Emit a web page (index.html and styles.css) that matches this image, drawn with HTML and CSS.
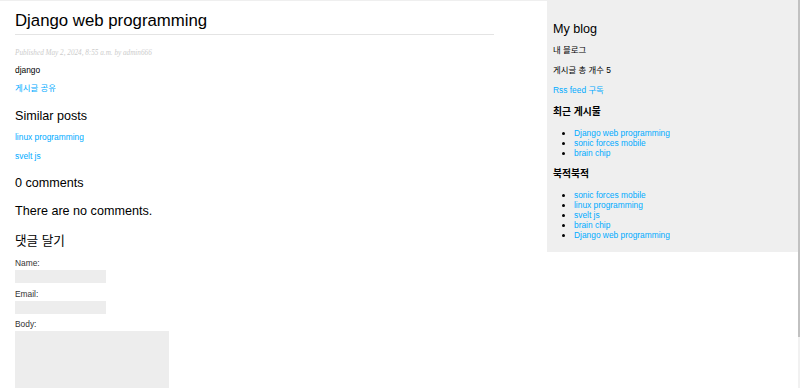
FILE: index.html
```html
<!DOCTYPE html>
<html lang="ko">
<head>
<meta charset="utf-8">
<title>Django web programming</title>
<link rel="stylesheet" href="styles.css">
</head>
<body>
<div class="page">
  <div class="content">
    <h1>Django web programming</h1>
    <p class="date">Published May 2, 2024, 8:55 a.m. by admin666</p>
    <p>django</p>
    <p><a href="#">게시글 공유</a></p>
    <h2>Similar posts</h2>
    <p><a href="#">linux programming</a></p>
    <p><a href="#">svelt js</a></p>
    <h2>0 comments</h2>
    <p class="big">There are no comments.</p>
    <h2>댓글 달기</h2>
    <form class="form">
      <label class="label">Name:</label>
      <input class="input" type="text">
      <label class="label">Email:</label>
      <input class="input" type="text">
      <label class="label">Body:</label>
      <textarea class="textarea"></textarea>
    </form>
  </div>
  <div class="sidebar">
    <h2>My blog</h2>
    <p>내 블로그</p>
    <p>게시글 총 개수 5</p>
    <p><a href="#">Rss feed 구독</a></p>
    <h3>최근 게시물</h3>
    <ul>
      <li><a href="#">Django web programming</a></li>
      <li><a href="#">sonic forces mobile</a></li>
      <li><a href="#">brain chip</a></li>
    </ul>
    <h3>북적북적</h3>
    <ul>
      <li><a href="#">sonic forces mobile</a></li>
      <li><a href="#">linux programming</a></li>
      <li><a href="#">svelt js</a></li>
      <li><a href="#">brain chip</a></li>
      <li><a href="#">Django web programming</a></li>
    </ul>
  </div>
</div>
<div class="scrollbar"><div class="thumb"></div></div>
</body>
</html>
```
FILE: styles.css
```css
html, body {
  margin: 0;
  padding: 0;
}
body {
  font-family: "Liberation Sans", Arial, "Noto Sans CJK KR", sans-serif;
  font-size: 8.4px;
  line-height: 10.08px;
  color: #000;
  background: #fff;
  height: 388px;
  overflow: hidden;
  border-top: 1px solid #efefef;
  box-sizing: border-box;
}
a {
  color: #00abff;
  text-decoration: none;
}
.page {
  display: flex;
  justify-content: space-between;
  align-items: flex-start;
  width: 798px;
}
.content {
  width: 479px;
  padding-left: 15px;
}
h1 {
  font-weight: normal;
  font-size: 16.8px;
  line-height: 19.3px;
  margin: 10.25px 0 13.5px;
  padding-bottom: 3.5px;
  border-bottom: 1px solid #e4e4e4;
}
h2 {
  font-weight: normal;
  font-size: 12.6px;
  line-height: 14.5px;
  margin: 15.75px 0 0;
}
h3 {
  font-size: 9.8px;
  line-height: 12px;
  font-weight: bold;
  margin: 9.8px 0;
}
p {
  margin: 8.4px 0;
}
p.date {
  color: #ccc;
  font-family: "Liberation Serif", Georgia, serif;
  font-style: italic;
  font-size: 7.2px;
  line-height: 8px;
  margin: 6.3px 0;
}
p.big {
  font-size: 12.6px;
  line-height: 14.5px;
  margin: 12.6px 0;
}
.form {
  margin-top: 10px;
}
.label {
  display: block;
  color: #333;
  margin-bottom: 2.1px;
}
.input {
  display: block;
  width: 91px;
  height: 13px;
  box-sizing: border-box;
  border: 0;
  padding: 0;
  margin: 0 0 5.25px;
  background: #ededed;
}
.textarea {
  display: block;
  width: 154px;
  height: 90px;
  box-sizing: border-box;
  border: 0;
  padding: 0;
  margin: 0;
  background: #ededed;
  resize: none;
}
.sidebar {
  width: 251px;
  box-sizing: border-box;
  padding: 6.5px 6px 4px;
  background: #efefef;
  margin-top: -1px;
}
.sidebar p {
  line-height: 11.5px;
}
.sidebar ul {
  margin: 9.8px 0 8.4px;
  padding-left: 21px;
  line-height: 10px;
}
.scrollbar {
  position: fixed;
  top: 0;
  right: 0;
  width: 2px;
  height: 388px;
  background: #f1f1f1;
}
.thumb {
  height: 337px;
  background: #c1c1c1;
}
```
